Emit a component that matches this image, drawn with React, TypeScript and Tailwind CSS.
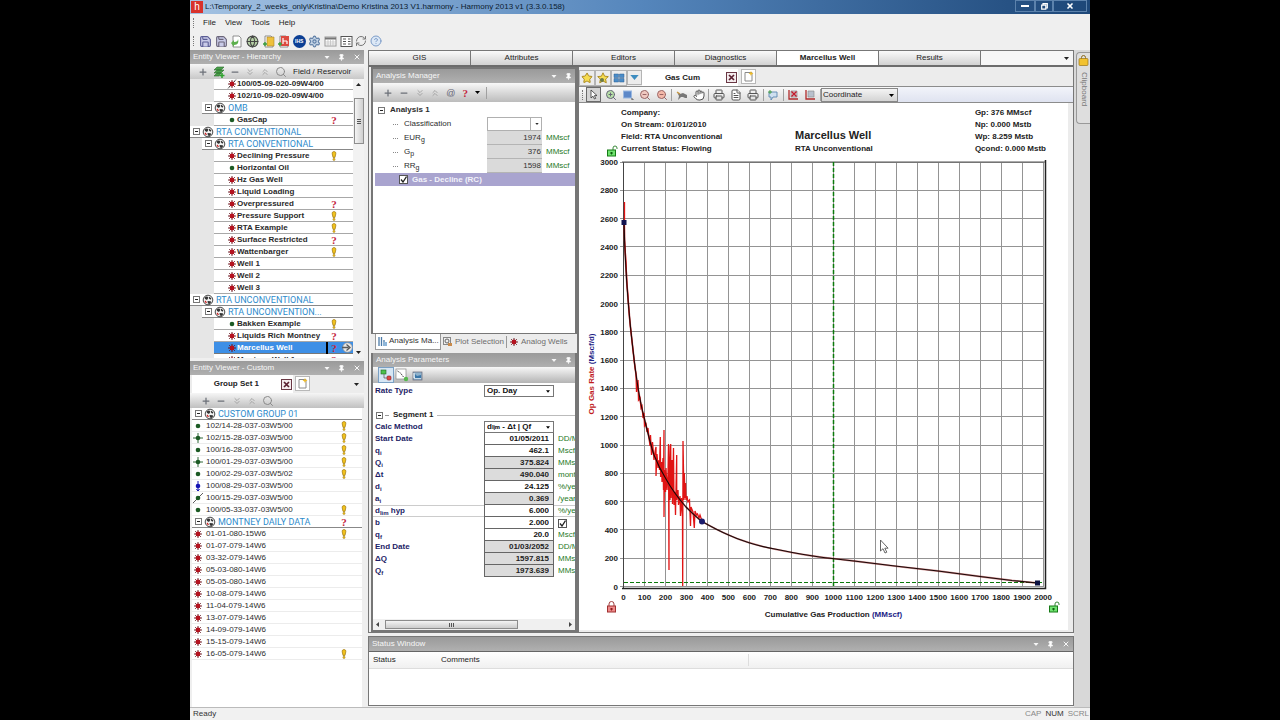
import { FunctionComponent, ReactNode } from "react";
import {
  Calendar,
  ChevronsDown,
  ChevronsUp,
  CircleHelp,
  FileText,
  Globe,
  Hand,
  Minus,
  Pin,
  Plus,
  Printer,
  RefreshCw,
  Save,
  Search,
  Settings,
  Star,
  X,
  ZoomIn,
  ZoomOut,
} from "lucide-react";

type Marker = "gas" | "oil" | "oilCross" | "inj" | "oilSlash" | "gasSlash";
type Flag = "warn" | "ask";

type TreeRowType = {
  level: number;
  text: string;
  group?: boolean;
  marker?: Marker;
  flag?: Flag;
  selected?: boolean;
};

const hierarchy: TreeRowType[] = [
  { level: 2, text: "100/05-09-020-09W4/00", marker: "gasSlash" },
  { level: 2, text: "102/10-09-020-09W4/00", marker: "gas" },
  { level: 1, text: "OMB", group: true },
  { level: 2, text: "GasCap", marker: "oil", flag: "ask" },
  { level: 0, text: "RTA CONVENTIONAL", group: true },
  { level: 1, text: "RTA CONVENTIONAL", group: true },
  { level: 2, text: "Declining Pressure", marker: "gas", flag: "warn" },
  { level: 2, text: "Horizontal Oil", marker: "oil" },
  { level: 2, text: "Hz Gas Well", marker: "gas" },
  { level: 2, text: "Liquid Loading", marker: "gas" },
  { level: 2, text: "Overpressured", marker: "gas", flag: "ask" },
  { level: 2, text: "Pressure Support", marker: "gas", flag: "warn" },
  { level: 2, text: "RTA Example", marker: "gas", flag: "warn" },
  { level: 2, text: "Surface Restricted", marker: "gas", flag: "ask" },
  { level: 2, text: "Wattenbarger", marker: "gas", flag: "warn" },
  { level: 2, text: "Well 1", marker: "gas" },
  { level: 2, text: "Well 2", marker: "gas" },
  { level: 2, text: "Well 3", marker: "gas" },
  { level: 0, text: "RTA UNCONVENTIONAL", group: true },
  { level: 1, text: "RTA UNCONVENTION...", group: true },
  { level: 2, text: "Bakken Example", marker: "oil", flag: "warn" },
  { level: 2, text: "Liquids Rich Montney", marker: "gas", flag: "ask" },
  { level: 2, text: "Marcellus Well", marker: "gas", flag: "ask", selected: true },
  { level: 2, text: "Montney Well 1", marker: "gas", flag: "ask" },
];

const custom: TreeRowType[] = [
  { level: 0, text: "CUSTOM GROUP 01", group: true },
  { level: 0, text: "102/14-28-037-03W5/00", marker: "oil", flag: "warn" },
  { level: 0, text: "102/15-28-037-03W5/00", marker: "oilCross", flag: "warn" },
  { level: 0, text: "100/16-28-037-03W5/00", marker: "oil", flag: "warn" },
  { level: 0, text: "100/01-29-037-03W5/00", marker: "oilCross", flag: "warn" },
  { level: 0, text: "100/02-29-037-03W5/02", marker: "oil", flag: "warn" },
  { level: 0, text: "100/08-29-037-03W5/00", marker: "inj" },
  { level: 0, text: "100/15-29-037-03W5/00", marker: "oilSlash" },
  { level: 0, text: "100/05-33-037-03W5/00", marker: "oil", flag: "warn" },
  { level: 0, text: "MONTNEY DAILY DATA", group: true, flag: "ask" },
  { level: 0, text: "01-01-080-15W6", marker: "gas", flag: "warn" },
  { level: 0, text: "01-07-079-14W6", marker: "gas" },
  { level: 0, text: "03-32-079-14W6", marker: "gas" },
  { level: 0, text: "05-03-080-14W6", marker: "gas" },
  { level: 0, text: "05-05-080-14W6", marker: "gas" },
  { level: 0, text: "10-08-079-14W6", marker: "gas" },
  { level: 0, text: "11-04-079-14W6", marker: "gas" },
  { level: 0, text: "13-07-079-14W6", marker: "gas" },
  { level: 0, text: "14-09-079-14W6", marker: "gas" },
  { level: 0, text: "15-15-079-14W6", marker: "gas" },
  { level: 0, text: "16-05-079-14W6", marker: "gas", flag: "warn" },
];

/* ---------- small drawings ---------- */

const WellMarker: FunctionComponent<{ type: Marker }> = ({ type }) => {
  const gas = type === "gas" || type === "gasSlash";
  const fill = gas ? "#b5121f" : type === "inj" ? "#1414b4" : "#1c5a24";
  return (
    <svg className="size-[10px] shrink-0" viewBox="0 0 10 10">
      {gas && (
        <path
          d="M5 1v8M1 5h8M2.2 2.2l5.6 5.6M7.8 2.2L2.2 7.8"
          stroke="#5c1018"
          strokeWidth="0.9"
        />
      )}
      {type === "gasSlash" && <path d="M1 9.5L9 .5" stroke="#333" strokeWidth="0.8" />}
      {type === "oilCross" && <path d="M5 0v10M0 5h10" stroke="#1c5a24" strokeWidth="0.9" />}
      {type === "inj" && <path d="M5 0v10M3.4 8L5 10l1.6-2" stroke="#1414b4" fill="none" />}
      {type === "oilSlash" && <path d="M0 10L10 0" stroke="#333" strokeWidth="0.8" />}
      <circle cx="5" cy="5" r={gas ? 2.4 : 2.3} fill={fill} />
    </svg>
  );
};

const GlobeMark = () => (
  <svg className="size-3 shrink-0" viewBox="0 0 12 12">
    <circle cx="6" cy="6" r="4.8" fill="#f4f4f4" stroke="#333" strokeWidth="0.9" />
    <path d="M2.5 3.5L5 2.2l1.5 1.6L5 6 3 5zM7 2.4l2.5 2-1.2 1.4L7 4.6zM5.5 7l3 .2 1 .9-2 2-1.6-.6z" fill="#333" />
    <path d="M3 7l1.5 1.8" stroke="#c22" strokeWidth="1.3" />
  </svg>
);

const Expander = () => (
  <button type="button" aria-label="Collapse" className="flex w-3 shrink-0 justify-center">
    <svg className="size-[7px]" viewBox="0 0 7 7">
      <rect x=".5" y=".5" width="6" height="6" fill="#fff" stroke="#777" />
      <path d="M2 3.5h3" stroke="#222" />
    </svg>
  </button>
);

const FlagMark: FunctionComponent<{ type: Flag }> = ({ type }) =>
  type === "warn" ? (
    <svg className="h-[10px] w-2 shrink-0" viewBox="0 0 8 10">
      <path d="M4 .6c1.4 0 2 .9 1.8 2.2L5 6.4H3l-.8-3.6C2 1.5 2.6.6 4 .6z" fill="#f2c31c" stroke="#9a7210" strokeWidth="0.7" />
      <circle cx="4" cy="8.4" r="1.1" fill="#f2c31c" stroke="#9a7210" strokeWidth="0.5" />
    </svg>
  ) : (
    <span className="w-2 shrink-0 text-center font-['Liberation_Serif',serif] text-[11px] font-bold text-[#c4243c]">?</span>
  );

const Caret: FunctionComponent<{ className?: string }> = ({ className }) => (
  <svg className={className ?? "h-[3px] w-[5px]"} viewBox="0 0 5 3">
    <path d="M0 0h5L2.5 3z" fill="currentColor" />
  </svg>
);

const LockMark: FunctionComponent<{ x: number; y: number; open?: boolean }> = ({ x, y, open }) => (
  <g transform={`translate(${x} ${y})`}>
    <path
      d={open ? "M6 5V3a2 2 0 0 1 4 0v1" : "M2 5V3a2.5 2.5 0 0 1 5 0v2"}
      fill="none"
      stroke={open ? "#3a8a3a" : "#a04040"}
    />
    <rect x=".5" y="5" width="8" height="6" fill={open ? "#6fe36f" : "#ee8a8a"} stroke={open ? "#167a16" : "#a03030"} />
    <path d="M3 8h3M4.5 7v2.5" stroke={open ? "#0d5c0d" : "#8a1a1a"} />
  </g>
);

const BoxedX = () => (
  <button type="button" aria-label="Close tab">
    <svg className="size-[11px]" viewBox="0 0 11 11">
      <rect x=".5" y=".5" width="10" height="10" fill="#f4ecee" stroke="#6a3844" />
      <path d="M3 3l5 5M8 3L3 8" stroke="#5a2030" strokeWidth="1.7" />
    </svg>
  </button>
);

const NewTab = () => (
  <button type="button" aria-label="New tab" className="border border-[#b8b8b8] bg-white p-px">
    <svg className="size-[11px]" viewBox="0 0 11 11">
      <path d="M2 1.5h7v8.5H2z" fill="#fff" stroke="#8a8a8a" />
      <path d="M8 0l.8 1.7 1.7.8-1.7.8L8 5l-.8-1.7-1.7-.8 1.7-.8z" fill="#eebc2c" />
    </svg>
  </button>
);

const CheckBox: FunctionComponent<{ label?: string }> = ({ label }) => (
  <span className="relative flex size-[9px] items-center justify-center">
    <input
      type="checkbox"
      aria-label={label}
      defaultChecked
      className="peer size-[9px] appearance-none border border-[#555] bg-white"
    />
    <svg className="pointer-events-none absolute hidden size-[7px] peer-checked:block" viewBox="0 0 7 7">
      <path d="M1 3.5L3 6l3.500-5.500" fill="none" stroke="#222" strokeWidth="1.3" />
    </svg>
  </span>
);

const Sheet: FunctionComponent<{ children?: ReactNode }> = ({ children }) => (
  <svg className="size-[13px]" viewBox="0 0 13 13">
    <path d="M3 1h6l2 2v9H3z" fill="#fff" stroke="#777" strokeWidth="0.8" />
    {children}
  </svg>
);

const PlotTool: FunctionComponent<{ children: ReactNode; label: string; pressed?: boolean }> = ({
  children,
  label,
  pressed,
}) => (
  <button
    type="button"
    aria-label={label}
    className={
      pressed
        ? "flex size-[15px] items-center justify-center border border-[#6a6a6a] bg-[#d4d4d4]"
        : "flex size-[15px] items-center justify-center"
    }
  >
    {children}
  </button>
);

const Separator = () => <span className="h-3 w-px bg-[#a0a0a0]" />;

/* ---------- panels ---------- */

const PanelTitle: FunctionComponent<{ text: string; closable?: boolean }> = ({ text, closable }) => (
  <div className="flex h-[14px] shrink-0 items-center gap-2 bg-linear-to-b from-[#9a9a9a] to-[#b0b0b0] pr-[3px] pl-[3px] text-[#f6f6f6]">
    <h2 className="flex-1">{text}</h2>
    <Caret className="h-[3px] w-[6px]" />
    <Pin className="size-[7px] fill-white" strokeWidth={3} />
    {closable && <X className="size-2" strokeWidth={3} />}
  </div>
);

const TreeRow: FunctionComponent<{ row: TreeRowType }> = ({ row }) => {
  if (row.group) {
    return (
      <li
        className={
          row.level === 0
            ? "flex h-3 items-center border-b border-[#888] bg-white"
            : "ml-3 flex h-3 items-center border-b border-[#888] bg-white"
        }
      >
        <Expander />
        <GlobeMark />
        <span className="pl-[2px] font-[Roboto] text-[9px] whitespace-nowrap text-[#2f8ccc]">{row.text}</span>
      </li>
    );
  }
  return (
    <li
      className={
        row.selected
          ? "ml-6 flex h-3 items-center border-b border-[#777] bg-[#3d8fe6] pl-[13px] text-white"
          : "ml-6 flex h-3 items-center border-b border-[#a8a8a8] bg-white pl-[13px] text-[#2a2a2a]"
      }
    >
      <WellMarker type={row.marker ?? "gas"} />
      <span
        className={
          row.selected
            ? "mr-[2px] flex-1 border-r-2 border-black font-bold whitespace-nowrap"
            : "flex-1 font-bold whitespace-nowrap"
        }
      >
        {row.text}
      </span>
      {row.flag && <FlagMark type={row.flag} />}
      <span className="flex w-[15px] justify-end">
        {row.selected && (
          <svg className="size-[11px]" viewBox="0 0 11 11">
            <circle cx="5.5" cy="5.5" r="4.8" fill="#e8e8e8" stroke="#888" strokeWidth="0.7" />
            <path d="M0 5.5h6.5M4.5 2.5l3.5 3-3.5 3" fill="none" stroke="#5a5a5a" strokeWidth="1.3" />
          </svg>
        )}
      </span>
    </li>
  );
};

const CustomRow: FunctionComponent<{ row: TreeRowType }> = ({ row }) =>
  row.group ? (
    <li className="flex h-3 items-center border-b border-[#888] pr-[14px]">
      <Expander />
      <GlobeMark />
      <span className="flex-1 pl-[2px] font-[Roboto] text-[9px] whitespace-nowrap text-[#2f8ccc]">{row.text}</span>
      {row.flag && <FlagMark type={row.flag} />}
    </li>
  ) : (
    <li className="flex h-3 items-center border-b border-[#ececec] pr-[14px] pl-px text-[#2c2c2c]">
      <WellMarker type={row.marker ?? "gas"} />
      <span className="flex-1 pl-[3px]">{row.text}</span>
      {row.flag && <FlagMark type={row.flag} />}
    </li>
  );

const HierarchyPanel = () => (
  <section className="flex shrink-0 flex-col">
    <PanelTitle text="Entity Viewer - Hierarchy" closable />
    <div className="flex h-[15px] items-center bg-linear-to-b from-[#f6f6f6] to-[#c8c8c8] pl-2">
      <div className="flex w-[89px] items-center justify-between text-[#6c7078]">
        <Plus className="size-[10px]" strokeWidth={3} />
        <svg className="size-3" viewBox="0 0 12 12">
          <path d="M4 1h7L8 4H1zM4 4h7L8 7H1zM4 7h4L6 10H1z" fill="#4aa04a" stroke="#2c6c2c" strokeWidth="0.6" />
          <path d="M9 7v5M6.5 9.5h5" stroke="#2fa52f" strokeWidth="1.6" />
        </svg>
        <Minus className="size-[10px]" strokeWidth={3} />
        <ChevronsDown className="size-[10px] text-[#9a9a9a]" />
        <ChevronsUp className="size-[10px] text-[#9a9a9a]" />
        <Search className="size-3 text-[#8a8a8a]" />
      </div>
      <span className="pl-[6px] text-[#222]">Field / Reservoir</span>
    </div>
    <div className="flex h-[279px] overflow-hidden">
      <ul className="-mt-px flex-1 bg-[#e6e6e6]">
        {hierarchy.map((row, i) => (
          <TreeRow key={i} row={row} />
        ))}
      </ul>
      <div className="flex w-[11px] flex-col items-center justify-between bg-[#f2f2f2] py-1">
        <div className="flex flex-col items-center gap-3">
          <Caret className="h-[3px] w-[5px] rotate-180" />
          <div className="flex h-[46px] w-[10px] flex-col items-center justify-center gap-px border border-[#8e8e8e] bg-linear-to-r from-[#f4f4f4] to-[#cfcfcf]">
            <i className="h-px w-1 bg-[#555]" />
            <i className="h-px w-1 bg-[#555]" />
            <i className="h-px w-1 bg-[#555]" />
          </div>
        </div>
        <Caret />
      </div>
    </div>
  </section>
);

const CustomPanel = () => (
  <section className="mt-[3px] flex flex-1 flex-col">
    <PanelTitle text="Entity Viewer - Custom" closable />
    <div className="flex h-[18px] items-center bg-[#ececec] pr-[5px] pl-[2px]">
      <div className="flex h-full w-[101px] items-center justify-end gap-[22px] bg-white pr-px">
        <span className="font-bold text-[#222]">Group Set 1</span>
        <BoxedX />
      </div>
      <div className="pl-[2px]">
        <NewTab />
      </div>
      <span className="flex-1" />
      <Caret />
    </div>
    <div className="flex h-[15px] items-center bg-linear-to-b from-[#f6f6f6] to-[#c0c0c0] pl-[11px] text-[#6c7078]">
      <div className="flex w-[73px] items-center justify-between">
        <Plus className="size-[10px]" strokeWidth={3} />
        <Minus className="size-[10px]" strokeWidth={3} />
        <ChevronsDown className="size-[10px] text-[#9a9a9a]" />
        <ChevronsUp className="size-[10px] text-[#9a9a9a]" />
        <Search className="size-3 text-[#8a8a8a]" />
      </div>
    </div>
    <ul className="mr-[2px] ml-[2px] flex-1 bg-white">
      {custom.map((row, i) => (
        <CustomRow key={i} row={row} />
      ))}
    </ul>
  </section>
);

const ResultRow: FunctionComponent<{ id: string; label: ReactNode; value: string }> = ({ id, label, value }) => (
  <div className="flex h-[14px] items-center">
    <span className="ml-[18px] w-[5px] border-t border-dotted border-[#888]" />
    <label htmlFor={id} className="flex-1 pl-[6px]">
      {label}
    </label>
    <input
      id={id}
      readOnly
      defaultValue={value}
      className="h-[14px] w-[55px] border-b border-[#b4b4b4] bg-[#dadada] px-px text-right text-[#333]"
    />
    <span className="w-[33px] pl-1 text-[#1f7a1f]">MMscf</span>
  </div>
);

const AnalysisManager = () => (
  <section className="flex flex-col border-x-2 border-t-2 border-[#767676] bg-white">
    <PanelTitle text="Analysis Manager" />
    <div className="flex h-[19px] items-center bg-linear-to-b from-[#f8f8f8] to-[#bcbcbc] pl-[10px] text-[#6c7078]">
      <div className="flex w-[104px] items-center justify-between">
        <Plus className="size-[10px]" strokeWidth={3} />
        <Minus className="size-[10px]" strokeWidth={3} />
        <ChevronsDown className="size-[10px] text-[#9a9a9a]" />
        <ChevronsUp className="size-[10px] text-[#9a9a9a]" />
        <span className="text-[9px] text-[#667]">@</span>
        <FlagMark type="ask" />
        <Caret className="h-[3px] w-[5px] text-black" />
        <Separator />
      </div>
    </div>
    <div className="flex h-[231px] flex-col pt-px pl-[2px] text-[#2c2c2c]">
      <div className="flex h-[14px] items-center">
        <Expander />
        <strong className="pl-[3px]">Analysis 1</strong>
      </div>
      <div className="flex h-[14px] items-center">
        <span className="ml-[18px] w-[5px] border-t border-dotted border-[#888]" />
        <label htmlFor="classification" className="flex-1 pl-[6px]">
          Classification
        </label>
        <div className="relative mr-[33px] w-[55px]">
          <select id="classification" className="block h-[14px] w-full appearance-none border border-[#b0b0b0] bg-white">
            <option></option>
          </select>
          <span className="pointer-events-none absolute inset-y-0 right-0 flex w-3 items-center justify-center border-l border-[#b0b0b0]">
            <Caret className="h-[2px] w-1" />
          </span>
        </div>
      </div>
      <ResultRow id="eur" label={<>EUR<sub className="text-[7px]">g</sub></>} value="1974" />
      <ResultRow id="gp" label={<>G<sub className="text-[7px]">p</sub></>} value="376" />
      <ResultRow id="rr" label={<>RR<sub className="text-[7px]">g</sub></>} value="1598" />
      <label className="flex h-[13px] items-center gap-1 bg-[#a9a4cf] pl-[24px] font-bold text-[#f2f2fa]">
        <CheckBox />
        Gas - Decline (RC)
      </label>
    </div>
    <div className="-mx-[2px] flex h-5 items-center border-t border-[#777] bg-[#ececec] pb-1 pl-1 text-[#6c6c6c]">
      <button type="button" className="flex h-4 w-[66px] items-center gap-[2px] border-x border-b border-[#999] bg-white pl-[2px] text-[#333]">
        <svg className="size-[9px] shrink-0" viewBox="0 0 9 9">
          <path d="M1 0v9M3.500 0v9M6 3v6" stroke="#4a7aa8" strokeWidth="1.3" />
          <path d="M5 5h4v4H5z" fill="#8fb6d8" />
        </svg>
        Analysis Ma...
      </button>
      <button type="button" className="flex items-center gap-[2px] border-r border-[#999] px-[2px]">
        <svg className="size-[10px]" viewBox="0 0 10 10">
          <rect x=".5" y=".5" width="7" height="7" fill="#eee" stroke="#888" />
          <circle cx="4" cy="4" r="2" fill="none" stroke="#666" />
          <rect x="5" y="6" width="4" height="3" fill="#c98a4a" />
        </svg>
        Plot Selection
      </button>
      <button type="button" className="flex items-center gap-[2px] pl-[2px]">
        <WellMarker type="gas" />
        Analog Wells
      </button>
    </div>
  </section>
);

type ParamType = { id: string; label: ReactNode; value: string; unit: ReactNode; locked?: boolean };

const Sub: FunctionComponent<{ children: ReactNode }> = ({ children }) => (
  <sub className="text-[6px]">{children}</sub>
);

const params: ParamType[] = [
  { id: "start", label: "Start Date", value: "01/05/2011", unit: "DD/MM/YYYY" },
  { id: "qi", label: <>q<Sub>i</Sub></>, value: "462.1", unit: "Mscf/d" },
  { id: "Qi", label: <>Q<Sub>i</Sub></>, value: "375.824", unit: "MMscf", locked: true },
  { id: "dt", label: "Δt", value: "490.040", unit: "month", locked: true },
  { id: "di", label: <>d<Sub>i</Sub></>, value: "24.125", unit: "%/year" },
  { id: "ai", label: <>a<Sub>i</Sub></>, value: "0.369", unit: "/year", locked: true },
  { id: "dlim", label: <>d<Sub>lim</Sub> hyp</>, value: "6.000", unit: "%/year" },
  { id: "b", label: "b", value: "2.000", unit: <CheckBox label="Use b" /> },
  { id: "qf", label: <>q<Sub>f</Sub></>, value: "20.0", unit: "Mscf/d" },
  { id: "end", label: "End Date", value: "01/03/2052", unit: "DD/MM/YYYY", locked: true },
  { id: "dQ", label: "ΔQ", value: "1597.815", unit: "MMscf", locked: true },
  { id: "Qf", label: <>Q<Sub>f</Sub></>, value: "1973.639", unit: "MMscf", locked: true },
];

const ParamSelect: FunctionComponent<{ id: string; label: string; value: string }> = ({ id, label, value }) => (
  <div className="flex h-3 items-center">
    <label htmlFor={id} className="flex-1 pl-[2px]">
      {label}
    </label>
    <div className="relative w-[70px]">
      <select
        id={id}
        className="block h-3 w-full appearance-none border border-[#777] bg-white pl-[2px] font-['Liberation_Sans','DejaVu_Sans',sans-serif] leading-[10px] text-[#111]"
      >
        <option>{value}</option>
      </select>
      <Caret className="pointer-events-none absolute top-[5px] right-1 h-[3px] w-1 text-black" />
    </div>
    <span className="w-[21px]" />
  </div>
);

const AnalysisParameters = () => (
  <section className="flex flex-1 flex-col border-x-2 border-b-2 border-[#767676] bg-white">
    <PanelTitle text="Analysis Parameters" />
    <div className="flex h-4 items-center gap-px bg-linear-to-b from-[#f8f8f8] to-[#b4b4b4] pl-[5px]">
      <button type="button" aria-label="Segments" className="border border-[#7aa0c4] bg-[#d6e6f4] p-px">
        <svg className="size-3" viewBox="0 0 12 12">
          <rect x="1" y="1" width="5" height="4" fill="#4cc04c" stroke="#226622" strokeWidth="0.6" />
          <path d="M4 5v4h3" fill="none" stroke="#555" strokeWidth="0.7" />
          <rect x="7" y="7" width="4" height="4" rx="1" fill="#e04848" stroke="#882222" strokeWidth="0.6" />
        </svg>
      </button>
      <button type="button" aria-label="Curve">
        <svg className="size-[14px]" viewBox="0 0 14 14">
          <rect x="1" y="1" width="10" height="10" fill="#fff" stroke="#888" strokeWidth="0.7" />
          <path d="M2.5 3l3 2 3 4" fill="none" stroke="#333" strokeDasharray="1.5 1" />
          <circle cx="11" cy="11" r="2.2" fill="#55b84c" />
        </svg>
      </button>
      <button type="button" aria-label="Chart" className="pl-[2px]">
        <svg className="size-[11px]" viewBox="0 0 11 11">
          <rect x="1" y="2" width="9" height="8" fill="#8fb2cc" stroke="#667" strokeWidth="0.7" />
          <path d="M2 3v5h7" fill="none" stroke="#fff" />
          <path d="M3 4l2 2 4-1v3H3z" fill="#3a76a8" />
        </svg>
      </button>
    </div>
    <div className="flex flex-1 flex-col overflow-hidden pt-[2px] font-bold text-[#1c1c66]">
      <ParamSelect id="rate" label="Rate Type" value="Op. Day" />
      <div className="mt-3 flex h-3 items-center text-[#222]">
        <Expander />
        <span className="w-1 border-t border-[#999]" />
        <span className="px-1">Segment 1</span>
        <span className="flex-1 border-t border-[#bbb]" />
      </div>
      <ParamSelect id="calc" label="Calc Method" value="dₗᵢₘ - Δt | Qf" />
      {params.map((p) => (
        <div key={p.id} className={p.id === "dlim" ? "flex h-3 items-center border-y border-[#ccc]" : "flex h-3 items-center"}>
          <label htmlFor={p.id} className="flex-1 pl-[2px]">
            {p.label}
          </label>
          <input
            id={p.id}
            defaultValue={p.value}
            readOnly={p.locked}
            className={
              p.locked
                ? "h-3 w-[70px] border-x border-b border-[#666] bg-[#dcdcdc] pr-1 text-right text-[#222]"
                : "h-3 w-[70px] border-x border-b border-[#666] bg-white pr-1 text-right text-[#111]"
            }
          />
          <span className="w-[21px] overflow-hidden pl-1 font-normal whitespace-nowrap text-[#1f7a1f]">{p.unit}</span>
        </div>
      ))}
    </div>
    <div className="flex h-[11px] items-center bg-[#f0f0f0] px-[2px] text-[#444]">
      <Caret className="h-[3px] w-[5px] rotate-90" />
      <div className="ml-[5px] flex h-[9px] w-[133px] items-center justify-center gap-px border border-[#8c8c8c] bg-linear-to-b from-[#f4f4f4] to-[#cccccc]">
        <i className="h-1 w-px bg-[#555]" />
        <i className="h-1 w-px bg-[#555]" />
        <i className="h-1 w-px bg-[#555]" />
      </div>
      <span className="flex-1" />
      <Caret className="h-[3px] w-[5px] -rotate-90" />
    </div>
  </section>
);

/* ---------- plot ---------- */

// origin of the plot grid and scale of the two axes
const X0 = 623.5;
const Y0 = 586.5;
const XS = 0.2098;
const YS = 0.1415;
const xTicks = Array.from({ length: 21 }, (_, i) => i * 100);
const yTicks = Array.from({ length: 16 }, (_, i) => i * 200);

const decline =
  "M624 222C625 260 627 300 633 350C636 377 639 398 644 417C648 434 651 446 654 455C658 465 661 471 666 479C672 490 679 499 686 507C691 512 696 517 702 521.5C710 526 719 531 728 534.7C735 538 742 540.5 749 542.7C758 545.5 767 547.7 776 549.3C788 552 800 554 813 556C820 557 827 558 834 558.7L854 561L897 566.3L938 571L980 576.5L1012 580.5L1037 583";

const rates =
  "624.5,202 624.5,240 626,262 627,285 628,296 629.5,318 631,332 633,350 635,368 636,374 636.5,392 638,380 638.5,400 640,398 641,408 642,406 643,418 644,413 644.5,426 646,424 647,432 648,428 649,438 650,446 650.5,435 651.5,455 652.5,442 654,460 655,452 656,447 656,476 657,454 658,468 659,460 659.5,470 660.3,437 660.6,477 661.5,462 662,482 663,458 663.5,490 664,430 664,517 664.5,470 665.5,492 666,468 667,490 668,474 668.5,444 669,570 669,446 670,500 670.7,444 671,498 672,460 672.5,504 673.5,448 674,505 675,492 675.5,515 676.7,455 676.7,500 678,490 678.5,505 680,496 680.5,516 681.5,498 682.5,517 682.7,586 683,441 684,500 684.3,473 685,498 685.5,483 686,500 687,496 688,502 689.5,500 690.5,526 691,507 693,512 694.3,528 695,511 696.5,515 697.5,514 699,518 700,515 702,521";

const Plot = () => (
  <svg className="block w-full overflow-visible" viewBox="579 155 489 475" fontFamily="Liberation Sans, Arial, sans-serif">
    <g stroke="#949494" strokeWidth="1" shapeRendering="crispEdges">
      {xTicks.map((t) => (
        <path key={t} d={`M${X0 + t * XS} 162V587`} />
      ))}
      {yTicks.map((t) => (
        <path key={t} d={`M620 ${Y0 - t * YS}H1044`} />
      ))}
    </g>
    <path d="M623.5 162V588.5" stroke="#444" />
    <path d="M622 588.5H1045.5V160" fill="none" stroke="#222" strokeWidth="1.5" />
    <path d="M622 162H1045" stroke="#555" />
    <g stroke="#0b7a0b" strokeDasharray="4 2" fill="none">
      <path d="M833.5 162V588" strokeWidth="1.5" />
      <path d="M624 582.5H1043" />
    </g>
    <path d={decline} fill="none" stroke="#a01818" strokeWidth="1.8" strokeOpacity="0.5" />
    <polyline points={rates} fill="none" stroke="#e01414" strokeWidth="1.3" />
    <path d={decline} fill="none" stroke="#1a0808" strokeWidth="1.1" />
    <rect x="621.5" y="220" width="5" height="5" fill="#141450" />
    <circle cx="702" cy="521.5" r="3" fill="#1c1c6c" />
    <rect x="1035" y="580.5" width="5" height="5" fill="#0c1040" />
    <g fontSize="8" fontWeight="bold" fill="#222">
      <g textAnchor="middle">
        {xTicks.map((t) => (
          <text key={t} x={X0 + t * XS} y="600">
            {t}
          </text>
        ))}
      </g>
      <g textAnchor="end">
        {yTicks.map((t) => (
          <text key={t} x="618" y={Y0 + 3 - t * YS}>
            {t}
          </text>
        ))}
      </g>
      <text x="833.5" y="617" textAnchor="middle">
        Cumulative Gas Production <tspan fill="#1c1c86">(MMscf)</tspan>
      </text>
      <text transform="translate(594 374) rotate(-90)" textAnchor="middle" fill="#c01c1c">
        Op Gas Rate <tspan fill="#1c1c86">(Mscf/d)</tspan>
      </text>
    </g>
    <LockMark x={607} y={145} open />
    <LockMark x={607} y={601} />
    <LockMark x={1049} y={601} open />
    <path d="M880.5 540v11l2.5-2.3 2 4.3 1.8-.8-2-4h3.3z" fill="#fff" stroke="#555" strokeWidth="0.9" />
  </svg>
);

const PlotPanel = () => (
  <section className="flex min-w-0 flex-1 flex-col border-l-2 border-[#767676] bg-[#ececec] pt-[2px] pb-[2px]">
    <div className="flex h-[17px] items-center">
      <button type="button" aria-label="Favourites" className="border border-[#b4b4b4] p-px">
        <Star className="size-3 fill-[#f6dc50] text-[#a8861c]" strokeWidth={2} />
      </button>
      <button type="button" aria-label="Add favourite" className="border border-[#b4b4b4] p-px">
        <svg className="size-3" viewBox="0 0 12 12">
          <path d="M6 .8l1.6 3.4 3.7.4-2.700 2.500.7 3.700L6 9 2.700 10.800l.7-3.700L.7 4.600l3.700-.4z" fill="#f6dc50" stroke="#a8861c" strokeWidth="0.9" />
          <circle cx="5" cy="8" r="2" fill="#6a7a4a" />
        </svg>
      </button>
      <button type="button" aria-label="Tile" className="border border-[#b4b4b4] p-px">
        <svg className="size-3" viewBox="0 0 12 12">
          <path d="M1 2h4.5v3.5H1zM6.5 2H11v3.5H6.5zM1 6.5h4.5V10H1zM6.5 6.5H11V10H6.5z" fill="#4a8cc8" stroke="#2a5c90" strokeWidth="0.5" />
        </svg>
      </button>
      <button type="button" aria-label="More" className="flex size-[15px] items-center justify-center border border-[#b4b4b4]">
        <Caret className="h-[5px] w-[9px] text-[#3c8cc0]" />
      </button>
      <div className="flex h-full w-[96px] items-center justify-end gap-[26px] bg-white pr-px">
        <span className="font-bold text-[#222]">Gas Cum</span>
        <BoxedX />
      </div>
      <div className="pl-[3px]">
        <NewTab />
      </div>
    </div>
    <div className="flex h-[17px] items-center border-y border-[#8c8c8c] bg-linear-to-b from-[#fafafa] to-[#dcdcdc] pl-[3px] text-[#555]">
      <span className="mr-[3px] h-[10px] border-l border-dotted border-[#777]" />
      <div className="flex w-[235px] items-center justify-between">
        <PlotTool label="Select" pressed>
          <svg className="size-[11px]" viewBox="0 0 11 11">
            <path d="M3 1v8l2-1.8L6.500 10l1.200-.6L6.400 6.600H9z" fill="#fff" stroke="#333" strokeWidth="0.8" />
          </svg>
        </PlotTool>
        <PlotTool label="Zoom in"><ZoomIn className="size-3 fill-[#b8e0a8] text-[#667]" /></PlotTool>
        <PlotTool label="Zoom window">
          <svg className="size-3" viewBox="0 0 12 12">
            <rect x="1.5" y="2" width="8" height="7" fill="#5c88c8" stroke="#9ab8e0" />
            <path d="M9 10h2v1" stroke="#555" fill="none" />
          </svg>
        </PlotTool>
        <PlotTool label="Zoom out"><ZoomOut className="size-3 fill-[#f0c8c0] text-[#966]" /></PlotTool>
        <PlotTool label="Zoom reset"><ZoomOut className="size-3 fill-[#f4b8a8] text-[#966]" /></PlotTool>
        <Separator />
        <PlotTool label="Edit points">
          <svg className="size-3" viewBox="0 0 12 12">
            <path d="M1 3l3 2 3-1 4 2v3H9L7 8H5L2 11l1-4z" fill="#777" />
            <path d="M1 3l3 2" stroke="#c8963c" strokeWidth="1.4" />
          </svg>
        </PlotTool>
        <PlotTool label="Pan"><Hand className="size-3 fill-white" /></PlotTool>
        <Separator />
        <PlotTool label="Print"><Printer className="size-3" /></PlotTool>
        <PlotTool label="Preview"><FileText className="size-3 fill-white" /></PlotTool>
        <PlotTool label="Print all"><Printer className="size-3" /></PlotTool>
        <Separator />
        <PlotTool label="Annotate">
          <svg className="size-3" viewBox="0 0 12 12">
            <path d="M2 3h8v5H6l-2 3V8H2z" fill="#cfe0f0" stroke="#5a86b0" strokeWidth="0.9" />
            <path d="M1 3h4M3 1v4" stroke="#4aa04a" />
          </svg>
        </PlotTool>
        <Separator />
        <PlotTool label="Clear axes">
          <svg className="size-3" viewBox="0 0 12 12">
            <path d="M2 1v9h9" fill="none" stroke="#b02a2a" strokeWidth="1.3" />
            <path d="M4 2h6v6H4z" fill="#dcc8cc" stroke="#777" strokeWidth="0.6" />
            <path d="M4.5 2.5l5 5M9.5 2.5l-5 5" stroke="#c01c2c" strokeWidth="1.4" />
          </svg>
        </PlotTool>
        <PlotTool label="Axes">
          <svg className="size-3" viewBox="0 0 12 12">
            <path d="M2 1v9h9" fill="none" stroke="#b02a2a" strokeWidth="1.3" />
            <path d="M4 2h6v6H4z" fill="#b8c0cc" stroke="#888" strokeWidth="0.6" />
          </svg>
        </PlotTool>
        <Separator />
      </div>
      <div className="relative w-[77px]">
        <select aria-label="Coordinate" className="block h-[14px] w-full appearance-none border border-[#888] bg-linear-to-b from-[#f4f4f4] to-[#d4d4d4] pl-px text-[#222]">
          <option>Coordinate</option>
        </select>
        <Caret className="pointer-events-none absolute top-[6px] right-1 h-[3px] w-[5px] text-black" />
      </div>
      <span className="h-full flex-1 bg-linear-to-b from-[#f2f4fa] to-[#dfe3f0]" />
    </div>
    <div className="mr-[5px] flex-1 bg-white pt-1 font-bold text-[#222]">
      <header className="grid h-12 grid-cols-[174px_1fr_auto] pr-[22px] pl-[42px]">
        <p>
          Company:
          <br />
          On Stream: 01/01/2010
          <br />
          Field: RTA Unconventional
          <br />
          Current Status: Flowing
        </p>
        <div className="self-end">
          <h1 className="text-[11px] leading-4">Marcellus Well</h1>
          <p>RTA Unconventional</p>
        </div>
        <p>
          Gp: 376 MMscf
          <br />
          Np: 0.000 Mstb
          <br />
          Wp: 8.259 Mstb
          <br />
          Qcond: 0.000 Mstb
        </p>
      </header>
      <Plot />
    </div>
  </section>
);

/* ---------- window ---------- */

const TitleBar = () => (
  <header className="flex h-[14px] items-center bg-linear-to-r from-[#a4c2e2] via-[#5586bc] to-[#1d4778] pr-[3px]">
    <span className="mr-[2px] ml-px flex size-3 items-center justify-center bg-[#d8322c] text-[10px] text-white">h</span>
    <span className="flex-1 text-[#0c1c30]">
      L:\Temporary_2_weeks_only\Kristina\Demo Kristina 2013 V1.harmony - Harmony 2013 v1 (3.3.0.158)
    </span>
    <div className="flex h-3 self-start text-white">
      <button type="button" aria-label="Minimize" className="flex w-[20px] items-center justify-center border border-[#5c82ac]">
        <i className="h-[2px] w-2 bg-white" />
      </button>
      <button type="button" aria-label="Restore" className="flex w-[18px] items-center justify-center border border-[#5c82ac]">
        <svg className="size-[7px]" viewBox="0 0 7 7">
          <path d="M2 2V.7h4.3V5H5M.7 2.2H4.8v4H.7z" fill="none" stroke="#fff" strokeWidth="1.2" />
        </svg>
      </button>
      <button type="button" aria-label="Close" className="flex w-[34px] items-center justify-center border border-[#5c82ac]">
        <X className="size-2" strokeWidth={5} />
      </button>
    </div>
  </header>
);

const MainToolbar = () => (
  <div className="flex h-[18px] items-center pl-[3px]">
    <span className="mr-[5px] h-[10px] border-l border-dotted border-[#777]" />
    <div className="flex w-[183px] items-center justify-between">
      <Save className="size-[13px] fill-[#c9cbe8] text-[#5a5c94]" />
      <Save className="size-[13px] fill-[#c9cbe8] text-[#6a6478]" />
      <Sheet>
        <path d="M1 8l3-3v2c3 0 4-1 4-3 1 3 0 6-4 6v2z" fill="#5cb04c" />
      </Sheet>
      <Globe className="size-[13px] fill-[#b6d0a6] text-[#444]" />
      <Sheet>
        <path d="M5 2h7v9H5z" fill="#eec13c" stroke="#a8842c" strokeWidth="0.6" />
        <path d="M1 9h4M3 7v4" stroke="#3c9c3c" strokeWidth="1.4" />
      </Sheet>
      <Sheet>
        <path d="M4 1h8v10H4z" fill="#dc4a40" />
        <path d="M6 3v6M6 6h4M10 6v3" stroke="#fff" strokeWidth="1.2" />
        <path d="M1 9h4M3 7v4" stroke="#3c9c3c" strokeWidth="1.4" />
      </Sheet>
      <span className="flex size-[13px] items-center justify-center rounded-full bg-[#0c3f94] text-[5px] font-bold text-white">IHS</span>
      <Settings className="size-[13px] fill-[#c4d4e6] text-[#5c7ca4]" />
      <svg className="size-[13px]" viewBox="0 0 13 13">
        <rect x="1" y="2" width="11" height="9" fill="#fff" stroke="#999" />
        <path d="M1 3.5h11" stroke="#777" strokeWidth="2" />
        <path d="M1 7h11M1 9h11M4 4v7M6.500 4v7M9 4v7" stroke="#bbb" strokeWidth="0.7" />
      </svg>
      <svg className="size-[13px]" viewBox="0 0 13 13">
        <rect x="1" y="1.5" width="11" height="10" fill="#fff" stroke="#555" />
        <path d="M3 4h3M3 6.5h3M3 9h3M8 4h2.5M8 6.5h2.5M8 9h2.5" stroke="#555" />
      </svg>
      <RefreshCw className="size-3 text-[#777]" />
      <CircleHelp className="size-3 fill-[#dce8f6] text-[#7c9cc8]" />
    </div>
  </div>
);

const tabs = ["GIS", "Attributes", "Editors", "Diagnostics", "Marcellus Well", "Results"];

const MainTabs = () => (
  <nav className="flex h-[17px] items-stretch border-t border-b-2 border-t-[#777] border-b-[#6c6c6c] bg-[#f6f6f6] pr-1">
    {tabs.map((t) => (
      <button
        key={t}
        type="button"
        className={
          t === "Marcellus Well"
            ? "w-[102px] border-r border-[#777] bg-white font-bold text-[#222]"
            : "w-[102px] border-r border-[#777] bg-linear-to-b from-[#fafafa] to-[#d2d2d2] text-[#222]"
        }
      >
        {t}
      </button>
    ))}
    <span className="flex-1" />
    <Caret className="h-[3px] w-[5px] self-center" />
  </nav>
);

const StatusWindow = () => (
  <section className="mt-[3px] flex flex-1 flex-col border border-[#777] bg-white">
    <PanelTitle text="Status Window" closable />
    <div className="flex h-[18px] items-center border-t border-b border-t-[#666] border-b-[#ddd] bg-linear-to-b from-white to-[#f0f0f0] pl-1 text-[#222]">
      <span className="w-[68px]">Status</span>
      <span className="w-[308px] border-r border-[#ddd]">Comments</span>
    </div>
  </section>
);

const ClipboardStrip = () => (
  <aside className="w-4 shrink-0 bg-[#d8d8d8] pt-[2px] pl-[2px]">
    <button type="button" className="flex h-[72px] w-full flex-col items-center gap-[6px] rounded-l-sm border border-r-0 border-[#999] bg-[#dedede] pt-[2px] text-[#777]">
      <svg className="size-[11px] shrink-0" viewBox="0 0 11 11">
        <path d="M3.5 4V2.500a2 2 0 0 1 4 0V4" fill="none" stroke="#8a6a1c" />
        <rect x="1" y="3.5" width="9" height="7" rx="1" fill="#f2c230" stroke="#9a7418" strokeWidth="0.7" />
      </svg>
      <span className="[writing-mode:vertical-rl]">Clipboard</span>
    </button>
  </aside>
);

const App: FunctionComponent = () => {
  return (
    <div className="min-h-screen bg-black px-[190px] font-['Liberation_Sans',Arial,sans-serif] text-[8px] leading-3">
      <div className="flex min-h-screen flex-col overflow-hidden bg-[#efefef] text-[#222]">
        <TitleBar />
        <nav className="flex h-[18px] items-center gap-[9px] pl-[3px]">
          <span className="h-[10px] border-l border-dotted border-[#777]" />
          <button type="button">File</button>
          <button type="button">View</button>
          <button type="button">Tools</button>
          <button type="button">Help</button>
        </nav>
        <MainToolbar />
        <main className="flex flex-1">
          <div className="flex w-[174px] shrink-0 flex-col">
            <HierarchyPanel />
            <CustomPanel />
          </div>
          <div className="ml-1 flex min-w-0 flex-1 flex-col pb-px">
            <div className="flex flex-col border-x border-b border-[#777]">
              <MainTabs />
              <div className="flex">
                <div className="ml-[2px] flex w-[206px] shrink-0 flex-col">
                  <AnalysisManager />
                  <AnalysisParameters />
                </div>
                <PlotPanel />
              </div>
            </div>
            <StatusWindow />
          </div>
          <ClipboardStrip />
        </main>
        <footer className="flex h-[13px] items-center gap-1 border-t border-[#bbb] bg-[#f1f1f1] pr-px pl-[3px] text-[#333]">
          <span className="flex-1">Ready</span>
          <span className="text-[#888]">CAP</span>
          <span>NUM</span>
          <span className="text-[#888]">SCRL</span>
        </footer>
      </div>
    </div>
  );
};

export default App;
